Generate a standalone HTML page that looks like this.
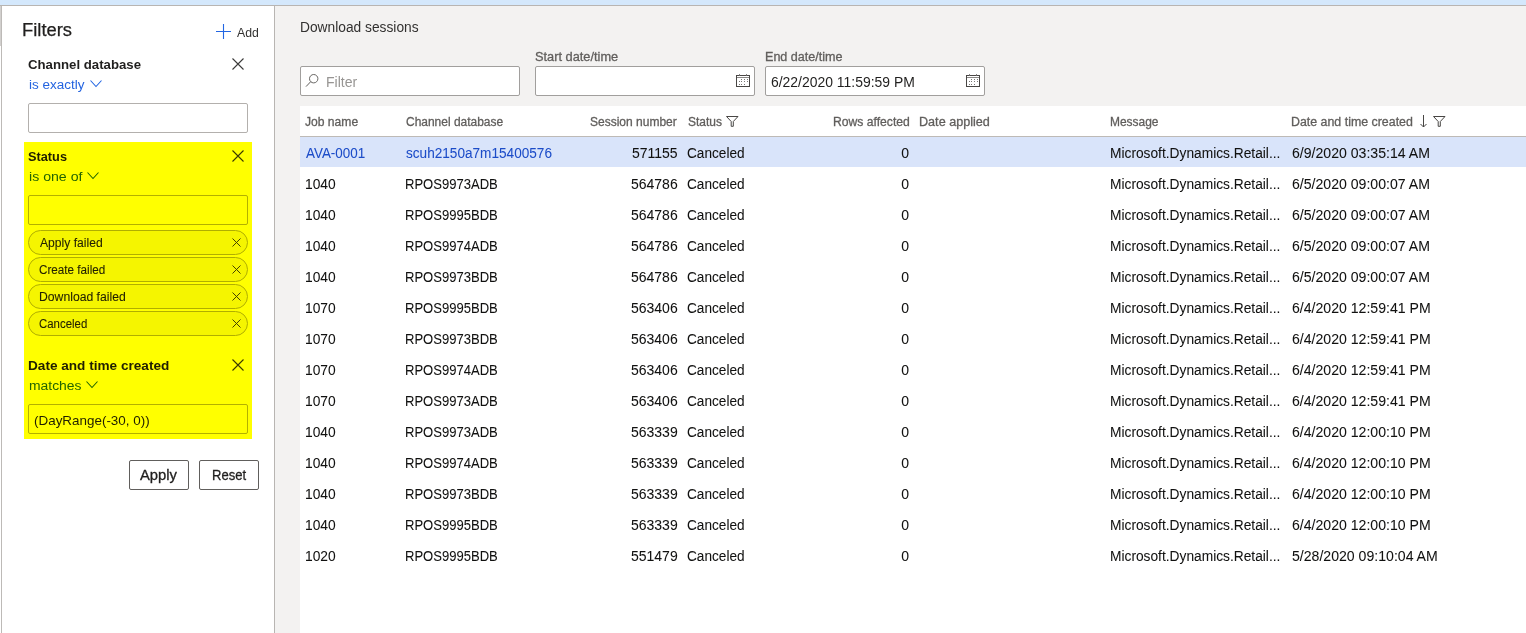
<!DOCTYPE html>
<html><head><meta charset="utf-8"><style>
html,body{margin:0;padding:0;}
body{width:1526px;height:633px;overflow:hidden;position:relative;background:#fff;font-family:"Liberation Sans",sans-serif;}
.t{position:absolute;white-space:nowrap;}
svg{position:absolute;overflow:visible;}
</style></head><body>
<div style="position:absolute;left:0px;top:0px;width:1526px;height:5px;box-sizing:border-box;background:#d4e8fc;"></div>
<div style="position:absolute;left:0px;top:5px;width:1526px;height:1px;box-sizing:border-box;background:#b8b5b2;"></div>
<div style="position:absolute;left:0px;top:6px;width:1px;height:40px;box-sizing:border-box;background:#d2d0ce;"></div>
<div style="position:absolute;left:1px;top:6px;width:1px;height:627px;box-sizing:border-box;background:#bdbab7;"></div>
<div style="position:absolute;left:275px;top:6px;width:1251px;height:627px;box-sizing:border-box;background:#f3f2f1;"></div>
<div style="position:absolute;left:274px;top:6px;width:1px;height:627px;box-sizing:border-box;background:#b8b5b2;"></div>
<div class="t" style="left:21.53px;top:21px;font-size:18px;line-height:18px;color:#201f1e;transform:scaleX(1.0217);transform-origin:0 0;-webkit-text-stroke:0.25px #201f1e;">Filters</div>
<svg style="left:216px;top:24px" width="15" height="15"><path d="M0 7.5H15M7.5 0V15" stroke="#2266e3" stroke-width="1.1" fill="none"/></svg>
<div class="t" style="left:236.50px;top:27px;font-size:12px;line-height:12px;color:#323130;transform:scaleX(1.0234);transform-origin:0 0;">Add</div>
<div class="t" style="left:27.97px;top:58px;font-size:13px;line-height:13px;color:#201f1e;font-weight:700;transform:scaleX(1.0160);transform-origin:0 0;">Channel database</div>
<svg style="left:232px;top:58px" width="12" height="12"><path d="M0.5 0.5L11.5 11.5M11.5 0.5L0.5 11.5" stroke="#3b3a39" stroke-width="1.1" fill="none"/></svg>
<div class="t" style="left:29.06px;top:78px;font-size:13.7px;line-height:13.7px;color:#2464e0;transform:scaleX(0.9847);transform-origin:0 0;">is exactly</div>
<svg style="left:89.5px;top:80px" width="12" height="7"><path d="M0.5 0.5L6.0 6.5L11.5 0.5" stroke="#2266e3" stroke-width="1.1" fill="none"/></svg>
<div style="position:absolute;left:28px;top:103px;width:220px;height:30px;box-sizing:border-box;border:1px solid #b3b0ad;border-radius:2px;background:#fff;"></div>
<div class="t" style="left:28.32px;top:150px;font-size:13px;line-height:13px;color:#201f1e;font-weight:700;transform:scaleX(0.9809);transform-origin:0 0;">Status</div>
<svg style="left:232px;top:150px" width="12" height="12"><path d="M0.5 0.5L11.5 11.5M11.5 0.5L0.5 11.5" stroke="#3b3a39" stroke-width="1.1" fill="none"/></svg>
<div class="t" style="left:28.71px;top:170px;font-size:13.7px;line-height:13.7px;color:#2464e0;transform:scaleX(1.0329);transform-origin:0 0;">is one of</div>
<svg style="left:87px;top:172px" width="12" height="7"><path d="M0.5 0.5L6.0 6.5L11.5 0.5" stroke="#2266e3" stroke-width="1.1" fill="none"/></svg>
<div style="position:absolute;left:28px;top:195px;width:220px;height:30px;box-sizing:border-box;border:1px solid #b3b0ad;border-radius:2px;background:#fff;"></div>
<div style="position:absolute;left:28px;top:230px;width:220px;height:25px;box-sizing:border-box;border:1px solid #b0aeac;border-radius:13px;background:#f5f5f5;"></div>
<div class="t" style="left:39.50px;top:237px;font-size:12.5px;line-height:12.5px;color:#201f1e;transform:scaleX(0.9706);transform-origin:0 0;-webkit-text-stroke:0.1px #201f1e;">Apply failed</div>
<svg style="left:231.5px;top:237.7px" width="9" height="9"><path d="M0.5 0.5L8.5 8.5M8.5 0.5L0.5 8.5" stroke="#3b3a39" stroke-width="0.95" fill="none"/></svg>
<div style="position:absolute;left:28px;top:257px;width:220px;height:25px;box-sizing:border-box;border:1px solid #b0aeac;border-radius:13px;background:#f5f5f5;"></div>
<div class="t" style="left:38.92px;top:264px;font-size:12.5px;line-height:12.5px;color:#201f1e;transform:scaleX(0.9353);transform-origin:0 0;-webkit-text-stroke:0.1px #201f1e;">Create failed</div>
<svg style="left:231.5px;top:264.7px" width="9" height="9"><path d="M0.5 0.5L8.5 8.5M8.5 0.5L0.5 8.5" stroke="#3b3a39" stroke-width="0.95" fill="none"/></svg>
<div style="position:absolute;left:28px;top:284px;width:220px;height:25px;box-sizing:border-box;border:1px solid #b0aeac;border-radius:13px;background:#f5f5f5;"></div>
<div class="t" style="left:38.52px;top:291px;font-size:12.5px;line-height:12.5px;color:#201f1e;transform:scaleX(0.9756);transform-origin:0 0;-webkit-text-stroke:0.1px #201f1e;">Download failed</div>
<svg style="left:231.5px;top:291.7px" width="9" height="9"><path d="M0.5 0.5L8.5 8.5M8.5 0.5L0.5 8.5" stroke="#3b3a39" stroke-width="0.95" fill="none"/></svg>
<div style="position:absolute;left:28px;top:311px;width:220px;height:25px;box-sizing:border-box;border:1px solid #b0aeac;border-radius:13px;background:#f5f5f5;"></div>
<div class="t" style="left:38.93px;top:318px;font-size:12.5px;line-height:12.5px;color:#201f1e;transform:scaleX(0.9148);transform-origin:0 0;-webkit-text-stroke:0.1px #201f1e;">Canceled</div>
<svg style="left:231.5px;top:318.7px" width="9" height="9"><path d="M0.5 0.5L8.5 8.5M8.5 0.5L0.5 8.5" stroke="#3b3a39" stroke-width="0.95" fill="none"/></svg>
<div class="t" style="left:27.95px;top:359px;font-size:13px;line-height:13px;color:#201f1e;font-weight:700;transform:scaleX(1.0459);transform-origin:0 0;">Date and time created</div>
<svg style="left:232px;top:359px" width="12" height="12"><path d="M0.5 0.5L11.5 11.5M11.5 0.5L0.5 11.5" stroke="#3b3a39" stroke-width="1.1" fill="none"/></svg>
<div class="t" style="left:28.83px;top:379px;font-size:13.7px;line-height:13.7px;color:#2464e0;transform:scaleX(1.0143);transform-origin:0 0;">matches</div>
<svg style="left:85.5px;top:381px" width="12" height="7"><path d="M0.5 0.5L6.0 6.5L11.5 0.5" stroke="#2266e3" stroke-width="1.1" fill="none"/></svg>
<div style="position:absolute;left:28px;top:404px;width:220px;height:30px;box-sizing:border-box;border:1px solid #b3b0ad;border-radius:2px;background:#fff;"></div>
<div class="t" style="left:33.69px;top:414px;font-size:13.5px;line-height:13.5px;color:#201f1e;transform:scaleX(0.9946);transform-origin:0 0;">(DayRange(-30, 0))</div>
<div style="position:absolute;left:24px;top:142px;width:228px;height:297px;box-sizing:border-box;background:#ffff00;mix-blend-mode:multiply;"></div>
<div style="position:absolute;left:129px;top:460px;width:60px;height:30px;box-sizing:border-box;border:1px solid #605e5c;border-radius:2px;background:#fff;"></div>
<div class="t" style="left:140.40px;top:468px;font-size:14px;line-height:14px;color:#201f1e;transform:scaleX(1.0571);transform-origin:0 0;-webkit-text-stroke:0.3px #201f1e;">Apply</div>
<div style="position:absolute;left:199px;top:460px;width:60px;height:30px;box-sizing:border-box;border:1px solid #605e5c;border-radius:2px;background:#fff;"></div>
<div class="t" style="left:211.76px;top:468px;font-size:14px;line-height:14px;color:#201f1e;transform:scaleX(0.9317);transform-origin:0 0;-webkit-text-stroke:0.3px #201f1e;">Reset</div>
<div class="t" style="left:299.50px;top:20px;font-size:14px;line-height:14px;color:#323130;transform:scaleX(0.9832);transform-origin:0 0;">Download sessions</div>
<div class="t" style="left:534.56px;top:51px;font-size:12.5px;line-height:12.5px;color:#605e5c;transform:scaleX(1.0234);transform-origin:0 0;-webkit-text-stroke:0.3px #605e5c;">Start date/time</div>
<div class="t" style="left:764.70px;top:51px;font-size:12.5px;line-height:12.5px;color:#605e5c;transform:scaleX(1.0050);transform-origin:0 0;-webkit-text-stroke:0.3px #605e5c;">End date/time</div>
<div style="position:absolute;left:300px;top:66px;width:220px;height:30px;box-sizing:border-box;border:1px solid #a19f9d;border-radius:2px;background:#fff;"></div>
<div style="position:absolute;left:535px;top:66px;width:220px;height:30px;box-sizing:border-box;border:1px solid #a19f9d;border-radius:2px;background:#fff;"></div>
<div style="position:absolute;left:765px;top:66px;width:220px;height:30px;box-sizing:border-box;border:1px solid #a19f9d;border-radius:2px;background:#fff;"></div>
<svg style="left:305px;top:73px" width="15" height="15"><circle cx="8.7" cy="5.7" r="4.2" stroke="#605e5c" stroke-width="0.95" fill="none"/><path d="M5.7 8.7L1 13.6" stroke="#605e5c" stroke-width="1"/></svg>
<div class="t" style="left:325.87px;top:75px;font-size:14px;line-height:14px;color:#979593;transform:scaleX(1.0060);transform-origin:0 0;">Filter</div>
<svg style="left:736px;top:74px" width="15" height="13"><rect x="0.5" y="1.5" width="13" height="11" stroke="#484644" fill="none" stroke-width="1"/><path d="M1 3.5H13" stroke="#8a8886" stroke-width="1"/><path d="M3.5 0V1.5M10.5 0V1.5" stroke="#8a8886" stroke-width="1"/><rect x="5" y="5" width="1" height="1" fill="#797775"/><rect x="8" y="5" width="1" height="1" fill="#797775"/><rect x="11" y="5" width="1" height="1" fill="#797775"/><rect x="3" y="7" width="1" height="1" fill="#797775"/><rect x="5" y="7" width="1" height="1" fill="#797775"/><rect x="8" y="7" width="1" height="1" fill="#797775"/><rect x="11" y="7" width="1" height="1" fill="#797775"/><rect x="3" y="10" width="1" height="1" fill="#797775"/><rect x="5" y="10" width="1" height="1" fill="#797775"/><rect x="8" y="10" width="1" height="1" fill="#797775"/></svg>
<svg style="left:966px;top:74px" width="15" height="13"><rect x="0.5" y="1.5" width="13" height="11" stroke="#484644" fill="none" stroke-width="1"/><path d="M1 3.5H13" stroke="#8a8886" stroke-width="1"/><path d="M3.5 0V1.5M10.5 0V1.5" stroke="#8a8886" stroke-width="1"/><rect x="5" y="5" width="1" height="1" fill="#797775"/><rect x="8" y="5" width="1" height="1" fill="#797775"/><rect x="11" y="5" width="1" height="1" fill="#797775"/><rect x="3" y="7" width="1" height="1" fill="#797775"/><rect x="5" y="7" width="1" height="1" fill="#797775"/><rect x="8" y="7" width="1" height="1" fill="#797775"/><rect x="11" y="7" width="1" height="1" fill="#797775"/><rect x="3" y="10" width="1" height="1" fill="#797775"/><rect x="5" y="10" width="1" height="1" fill="#797775"/><rect x="8" y="10" width="1" height="1" fill="#797775"/></svg>
<div class="t" style="left:770.60px;top:75px;font-size:14px;line-height:14px;color:#201f1e;transform:scaleX(0.9954);transform-origin:0 0;">6/22/2020 11:59:59 PM</div>
<div style="position:absolute;left:300px;top:106px;width:1226px;height:527px;box-sizing:border-box;background:#fff;"></div>
<div style="position:absolute;left:300px;top:136px;width:1226px;height:1px;box-sizing:border-box;background:#bebab6;"></div>
<div style="position:absolute;left:300px;top:137px;width:1226px;height:30px;box-sizing:border-box;background:#d9e4fa;"></div>
<div class="t" style="left:304.76px;top:116px;font-size:12.5px;line-height:12.5px;color:#605e5c;transform:scaleX(0.9681);transform-origin:0 0;-webkit-text-stroke:0.3px #605e5c;">Job name</div>
<div class="t" style="left:405.70px;top:116px;font-size:12.5px;line-height:12.5px;color:#605e5c;transform:scaleX(0.9576);transform-origin:0 0;-webkit-text-stroke:0.3px #605e5c;">Channel database</div>
<div class="t" style="left:590.40px;top:116px;font-size:12.5px;line-height:12.5px;color:#605e5c;transform:scaleX(0.9609);transform-origin:0 0;-webkit-text-stroke:0.3px #605e5c;">Session number</div>
<div class="t" style="left:687.70px;top:116px;font-size:12.5px;line-height:12.5px;color:#605e5c;transform:scaleX(0.9600);transform-origin:0 0;-webkit-text-stroke:0.3px #605e5c;">Status</div>
<div class="t" style="left:832.53px;top:116px;font-size:12.5px;line-height:12.5px;color:#605e5c;transform:scaleX(0.9724);transform-origin:0 0;-webkit-text-stroke:0.3px #605e5c;">Rows affected</div>
<div class="t" style="left:919.29px;top:116px;font-size:12.5px;line-height:12.5px;color:#605e5c;transform:scaleX(1.0091);transform-origin:0 0;-webkit-text-stroke:0.3px #605e5c;">Date applied</div>
<div class="t" style="left:1110.44px;top:116px;font-size:12.5px;line-height:12.5px;color:#605e5c;transform:scaleX(0.9567);transform-origin:0 0;-webkit-text-stroke:0.3px #605e5c;">Message</div>
<div class="t" style="left:1291.31px;top:116px;font-size:12.5px;line-height:12.5px;color:#605e5c;transform:scaleX(0.9907);transform-origin:0 0;-webkit-text-stroke:0.3px #605e5c;">Date and time created</div>
<svg style="left:726px;top:116px" width="13" height="11"><path d="M0.5 0.5H12L7.3 5.5V10.3H5.2V5.5Z" stroke="#484644" stroke-width="1" fill="none" stroke-linejoin="round"/></svg>
<svg style="left:1419px;top:115px" width="9" height="13"><path d="M4.5 0V12M1.5 9L4.5 12L7.5 9" stroke="#484644" stroke-width="1" fill="none"/></svg>
<svg style="left:1433px;top:116px" width="13" height="11"><path d="M0.5 0.5H12L7.3 5.5V10.3H5.2V5.5Z" stroke="#484644" stroke-width="1" fill="none" stroke-linejoin="round"/></svg>
<div class="t" style="left:306.00px;top:146px;font-size:14px;line-height:14px;color:#1c4cc8;transform:scaleX(0.9584);transform-origin:0 0;-webkit-text-stroke:0.05px #1c4cc8;">AVA-0001</div>
<div class="t" style="left:405.59px;top:146px;font-size:14px;line-height:14px;color:#1c4cc8;transform:scaleX(0.9716);transform-origin:0 0;-webkit-text-stroke:0.05px #1c4cc8;">scuh2150a7m15400576</div>
<div class="t" style="left:631.94px;top:146px;font-size:14px;line-height:14px;color:#111110;-webkit-text-stroke:0.05px #111110;">571155</div>
<div class="t" style="left:687.32px;top:146px;font-size:14px;line-height:14px;color:#111110;transform:scaleX(0.9732);transform-origin:0 0;-webkit-text-stroke:0.05px #111110;">Canceled</div>
<div class="t" style="left:901.22px;top:146px;font-size:14px;line-height:14px;color:#111110;-webkit-text-stroke:0.05px #111110;">0</div>
<div class="t" style="left:1110.20px;top:146px;font-size:14px;line-height:14px;color:#111110;transform:scaleX(0.9820);transform-origin:0 0;-webkit-text-stroke:0.05px #111110;">Microsoft.Dynamics.Retail...</div>
<div class="t" style="left:1291.50px;top:146px;font-size:14px;line-height:14px;color:#111110;transform:scaleX(1.0067);transform-origin:0 0;-webkit-text-stroke:0.05px #111110;">6/9/2020 03:35:14 AM</div>
<div class="t" style="left:304.90px;top:177px;font-size:14px;line-height:14px;color:#111110;transform:scaleX(0.9864);transform-origin:0 0;-webkit-text-stroke:0.05px #111110;">1040</div>
<div class="t" style="left:404.96px;top:177px;font-size:14px;line-height:14px;color:#111110;transform:scaleX(0.9312);transform-origin:0 0;-webkit-text-stroke:0.05px #111110;">RPOS9973ADB</div>
<div class="t" style="left:630.96px;top:177px;font-size:14px;line-height:14px;color:#111110;-webkit-text-stroke:0.05px #111110;">564786</div>
<div class="t" style="left:687.32px;top:177px;font-size:14px;line-height:14px;color:#111110;transform:scaleX(0.9732);transform-origin:0 0;-webkit-text-stroke:0.05px #111110;">Canceled</div>
<div class="t" style="left:901.22px;top:177px;font-size:14px;line-height:14px;color:#111110;-webkit-text-stroke:0.05px #111110;">0</div>
<div class="t" style="left:1110.20px;top:177px;font-size:14px;line-height:14px;color:#111110;transform:scaleX(0.9820);transform-origin:0 0;-webkit-text-stroke:0.05px #111110;">Microsoft.Dynamics.Retail...</div>
<div class="t" style="left:1291.50px;top:177px;font-size:14px;line-height:14px;color:#111110;transform:scaleX(1.0067);transform-origin:0 0;-webkit-text-stroke:0.05px #111110;">6/5/2020 09:00:07 AM</div>
<div class="t" style="left:304.90px;top:208px;font-size:14px;line-height:14px;color:#111110;transform:scaleX(0.9864);transform-origin:0 0;-webkit-text-stroke:0.05px #111110;">1040</div>
<div class="t" style="left:404.96px;top:208px;font-size:14px;line-height:14px;color:#111110;transform:scaleX(0.9312);transform-origin:0 0;-webkit-text-stroke:0.05px #111110;">RPOS9995BDB</div>
<div class="t" style="left:630.96px;top:208px;font-size:14px;line-height:14px;color:#111110;-webkit-text-stroke:0.05px #111110;">564786</div>
<div class="t" style="left:687.32px;top:208px;font-size:14px;line-height:14px;color:#111110;transform:scaleX(0.9732);transform-origin:0 0;-webkit-text-stroke:0.05px #111110;">Canceled</div>
<div class="t" style="left:901.22px;top:208px;font-size:14px;line-height:14px;color:#111110;-webkit-text-stroke:0.05px #111110;">0</div>
<div class="t" style="left:1110.20px;top:208px;font-size:14px;line-height:14px;color:#111110;transform:scaleX(0.9820);transform-origin:0 0;-webkit-text-stroke:0.05px #111110;">Microsoft.Dynamics.Retail...</div>
<div class="t" style="left:1291.50px;top:208px;font-size:14px;line-height:14px;color:#111110;transform:scaleX(1.0067);transform-origin:0 0;-webkit-text-stroke:0.05px #111110;">6/5/2020 09:00:07 AM</div>
<div class="t" style="left:304.90px;top:239px;font-size:14px;line-height:14px;color:#111110;transform:scaleX(0.9864);transform-origin:0 0;-webkit-text-stroke:0.05px #111110;">1040</div>
<div class="t" style="left:404.96px;top:239px;font-size:14px;line-height:14px;color:#111110;transform:scaleX(0.9312);transform-origin:0 0;-webkit-text-stroke:0.05px #111110;">RPOS9974ADB</div>
<div class="t" style="left:630.96px;top:239px;font-size:14px;line-height:14px;color:#111110;-webkit-text-stroke:0.05px #111110;">564786</div>
<div class="t" style="left:687.32px;top:239px;font-size:14px;line-height:14px;color:#111110;transform:scaleX(0.9732);transform-origin:0 0;-webkit-text-stroke:0.05px #111110;">Canceled</div>
<div class="t" style="left:901.22px;top:239px;font-size:14px;line-height:14px;color:#111110;-webkit-text-stroke:0.05px #111110;">0</div>
<div class="t" style="left:1110.20px;top:239px;font-size:14px;line-height:14px;color:#111110;transform:scaleX(0.9820);transform-origin:0 0;-webkit-text-stroke:0.05px #111110;">Microsoft.Dynamics.Retail...</div>
<div class="t" style="left:1291.50px;top:239px;font-size:14px;line-height:14px;color:#111110;transform:scaleX(1.0067);transform-origin:0 0;-webkit-text-stroke:0.05px #111110;">6/5/2020 09:00:07 AM</div>
<div class="t" style="left:304.90px;top:270px;font-size:14px;line-height:14px;color:#111110;transform:scaleX(0.9864);transform-origin:0 0;-webkit-text-stroke:0.05px #111110;">1040</div>
<div class="t" style="left:404.96px;top:270px;font-size:14px;line-height:14px;color:#111110;transform:scaleX(0.9312);transform-origin:0 0;-webkit-text-stroke:0.05px #111110;">RPOS9973BDB</div>
<div class="t" style="left:630.96px;top:270px;font-size:14px;line-height:14px;color:#111110;-webkit-text-stroke:0.05px #111110;">564786</div>
<div class="t" style="left:687.32px;top:270px;font-size:14px;line-height:14px;color:#111110;transform:scaleX(0.9732);transform-origin:0 0;-webkit-text-stroke:0.05px #111110;">Canceled</div>
<div class="t" style="left:901.22px;top:270px;font-size:14px;line-height:14px;color:#111110;-webkit-text-stroke:0.05px #111110;">0</div>
<div class="t" style="left:1110.20px;top:270px;font-size:14px;line-height:14px;color:#111110;transform:scaleX(0.9820);transform-origin:0 0;-webkit-text-stroke:0.05px #111110;">Microsoft.Dynamics.Retail...</div>
<div class="t" style="left:1291.50px;top:270px;font-size:14px;line-height:14px;color:#111110;transform:scaleX(1.0067);transform-origin:0 0;-webkit-text-stroke:0.05px #111110;">6/5/2020 09:00:07 AM</div>
<div class="t" style="left:304.90px;top:301px;font-size:14px;line-height:14px;color:#111110;transform:scaleX(0.9864);transform-origin:0 0;-webkit-text-stroke:0.05px #111110;">1070</div>
<div class="t" style="left:404.96px;top:301px;font-size:14px;line-height:14px;color:#111110;transform:scaleX(0.9312);transform-origin:0 0;-webkit-text-stroke:0.05px #111110;">RPOS9995BDB</div>
<div class="t" style="left:630.96px;top:301px;font-size:14px;line-height:14px;color:#111110;-webkit-text-stroke:0.05px #111110;">563406</div>
<div class="t" style="left:687.32px;top:301px;font-size:14px;line-height:14px;color:#111110;transform:scaleX(0.9732);transform-origin:0 0;-webkit-text-stroke:0.05px #111110;">Canceled</div>
<div class="t" style="left:901.22px;top:301px;font-size:14px;line-height:14px;color:#111110;-webkit-text-stroke:0.05px #111110;">0</div>
<div class="t" style="left:1110.20px;top:301px;font-size:14px;line-height:14px;color:#111110;transform:scaleX(0.9820);transform-origin:0 0;-webkit-text-stroke:0.05px #111110;">Microsoft.Dynamics.Retail...</div>
<div class="t" style="left:1291.50px;top:301px;font-size:14px;line-height:14px;color:#111110;transform:scaleX(1.0067);transform-origin:0 0;-webkit-text-stroke:0.05px #111110;">6/4/2020 12:59:41 PM</div>
<div class="t" style="left:304.90px;top:332px;font-size:14px;line-height:14px;color:#111110;transform:scaleX(0.9864);transform-origin:0 0;-webkit-text-stroke:0.05px #111110;">1070</div>
<div class="t" style="left:404.96px;top:332px;font-size:14px;line-height:14px;color:#111110;transform:scaleX(0.9312);transform-origin:0 0;-webkit-text-stroke:0.05px #111110;">RPOS9973BDB</div>
<div class="t" style="left:630.96px;top:332px;font-size:14px;line-height:14px;color:#111110;-webkit-text-stroke:0.05px #111110;">563406</div>
<div class="t" style="left:687.32px;top:332px;font-size:14px;line-height:14px;color:#111110;transform:scaleX(0.9732);transform-origin:0 0;-webkit-text-stroke:0.05px #111110;">Canceled</div>
<div class="t" style="left:901.22px;top:332px;font-size:14px;line-height:14px;color:#111110;-webkit-text-stroke:0.05px #111110;">0</div>
<div class="t" style="left:1110.20px;top:332px;font-size:14px;line-height:14px;color:#111110;transform:scaleX(0.9820);transform-origin:0 0;-webkit-text-stroke:0.05px #111110;">Microsoft.Dynamics.Retail...</div>
<div class="t" style="left:1291.50px;top:332px;font-size:14px;line-height:14px;color:#111110;transform:scaleX(1.0067);transform-origin:0 0;-webkit-text-stroke:0.05px #111110;">6/4/2020 12:59:41 PM</div>
<div class="t" style="left:304.90px;top:363px;font-size:14px;line-height:14px;color:#111110;transform:scaleX(0.9864);transform-origin:0 0;-webkit-text-stroke:0.05px #111110;">1070</div>
<div class="t" style="left:404.96px;top:363px;font-size:14px;line-height:14px;color:#111110;transform:scaleX(0.9312);transform-origin:0 0;-webkit-text-stroke:0.05px #111110;">RPOS9974ADB</div>
<div class="t" style="left:630.96px;top:363px;font-size:14px;line-height:14px;color:#111110;-webkit-text-stroke:0.05px #111110;">563406</div>
<div class="t" style="left:687.32px;top:363px;font-size:14px;line-height:14px;color:#111110;transform:scaleX(0.9732);transform-origin:0 0;-webkit-text-stroke:0.05px #111110;">Canceled</div>
<div class="t" style="left:901.22px;top:363px;font-size:14px;line-height:14px;color:#111110;-webkit-text-stroke:0.05px #111110;">0</div>
<div class="t" style="left:1110.20px;top:363px;font-size:14px;line-height:14px;color:#111110;transform:scaleX(0.9820);transform-origin:0 0;-webkit-text-stroke:0.05px #111110;">Microsoft.Dynamics.Retail...</div>
<div class="t" style="left:1291.50px;top:363px;font-size:14px;line-height:14px;color:#111110;transform:scaleX(1.0067);transform-origin:0 0;-webkit-text-stroke:0.05px #111110;">6/4/2020 12:59:41 PM</div>
<div class="t" style="left:304.90px;top:394px;font-size:14px;line-height:14px;color:#111110;transform:scaleX(0.9864);transform-origin:0 0;-webkit-text-stroke:0.05px #111110;">1070</div>
<div class="t" style="left:404.96px;top:394px;font-size:14px;line-height:14px;color:#111110;transform:scaleX(0.9312);transform-origin:0 0;-webkit-text-stroke:0.05px #111110;">RPOS9973ADB</div>
<div class="t" style="left:630.96px;top:394px;font-size:14px;line-height:14px;color:#111110;-webkit-text-stroke:0.05px #111110;">563406</div>
<div class="t" style="left:687.32px;top:394px;font-size:14px;line-height:14px;color:#111110;transform:scaleX(0.9732);transform-origin:0 0;-webkit-text-stroke:0.05px #111110;">Canceled</div>
<div class="t" style="left:901.22px;top:394px;font-size:14px;line-height:14px;color:#111110;-webkit-text-stroke:0.05px #111110;">0</div>
<div class="t" style="left:1110.20px;top:394px;font-size:14px;line-height:14px;color:#111110;transform:scaleX(0.9820);transform-origin:0 0;-webkit-text-stroke:0.05px #111110;">Microsoft.Dynamics.Retail...</div>
<div class="t" style="left:1291.50px;top:394px;font-size:14px;line-height:14px;color:#111110;transform:scaleX(1.0067);transform-origin:0 0;-webkit-text-stroke:0.05px #111110;">6/4/2020 12:59:41 PM</div>
<div class="t" style="left:304.90px;top:425px;font-size:14px;line-height:14px;color:#111110;transform:scaleX(0.9864);transform-origin:0 0;-webkit-text-stroke:0.05px #111110;">1040</div>
<div class="t" style="left:404.96px;top:425px;font-size:14px;line-height:14px;color:#111110;transform:scaleX(0.9312);transform-origin:0 0;-webkit-text-stroke:0.05px #111110;">RPOS9973ADB</div>
<div class="t" style="left:630.96px;top:425px;font-size:14px;line-height:14px;color:#111110;-webkit-text-stroke:0.05px #111110;">563339</div>
<div class="t" style="left:687.32px;top:425px;font-size:14px;line-height:14px;color:#111110;transform:scaleX(0.9732);transform-origin:0 0;-webkit-text-stroke:0.05px #111110;">Canceled</div>
<div class="t" style="left:901.22px;top:425px;font-size:14px;line-height:14px;color:#111110;-webkit-text-stroke:0.05px #111110;">0</div>
<div class="t" style="left:1110.20px;top:425px;font-size:14px;line-height:14px;color:#111110;transform:scaleX(0.9820);transform-origin:0 0;-webkit-text-stroke:0.05px #111110;">Microsoft.Dynamics.Retail...</div>
<div class="t" style="left:1291.50px;top:425px;font-size:14px;line-height:14px;color:#111110;transform:scaleX(1.0067);transform-origin:0 0;-webkit-text-stroke:0.05px #111110;">6/4/2020 12:00:10 PM</div>
<div class="t" style="left:304.90px;top:456px;font-size:14px;line-height:14px;color:#111110;transform:scaleX(0.9864);transform-origin:0 0;-webkit-text-stroke:0.05px #111110;">1040</div>
<div class="t" style="left:404.96px;top:456px;font-size:14px;line-height:14px;color:#111110;transform:scaleX(0.9312);transform-origin:0 0;-webkit-text-stroke:0.05px #111110;">RPOS9974ADB</div>
<div class="t" style="left:630.96px;top:456px;font-size:14px;line-height:14px;color:#111110;-webkit-text-stroke:0.05px #111110;">563339</div>
<div class="t" style="left:687.32px;top:456px;font-size:14px;line-height:14px;color:#111110;transform:scaleX(0.9732);transform-origin:0 0;-webkit-text-stroke:0.05px #111110;">Canceled</div>
<div class="t" style="left:901.22px;top:456px;font-size:14px;line-height:14px;color:#111110;-webkit-text-stroke:0.05px #111110;">0</div>
<div class="t" style="left:1110.20px;top:456px;font-size:14px;line-height:14px;color:#111110;transform:scaleX(0.9820);transform-origin:0 0;-webkit-text-stroke:0.05px #111110;">Microsoft.Dynamics.Retail...</div>
<div class="t" style="left:1291.50px;top:456px;font-size:14px;line-height:14px;color:#111110;transform:scaleX(1.0067);transform-origin:0 0;-webkit-text-stroke:0.05px #111110;">6/4/2020 12:00:10 PM</div>
<div class="t" style="left:304.90px;top:487px;font-size:14px;line-height:14px;color:#111110;transform:scaleX(0.9864);transform-origin:0 0;-webkit-text-stroke:0.05px #111110;">1040</div>
<div class="t" style="left:404.96px;top:487px;font-size:14px;line-height:14px;color:#111110;transform:scaleX(0.9312);transform-origin:0 0;-webkit-text-stroke:0.05px #111110;">RPOS9973BDB</div>
<div class="t" style="left:630.96px;top:487px;font-size:14px;line-height:14px;color:#111110;-webkit-text-stroke:0.05px #111110;">563339</div>
<div class="t" style="left:687.32px;top:487px;font-size:14px;line-height:14px;color:#111110;transform:scaleX(0.9732);transform-origin:0 0;-webkit-text-stroke:0.05px #111110;">Canceled</div>
<div class="t" style="left:901.22px;top:487px;font-size:14px;line-height:14px;color:#111110;-webkit-text-stroke:0.05px #111110;">0</div>
<div class="t" style="left:1110.20px;top:487px;font-size:14px;line-height:14px;color:#111110;transform:scaleX(0.9820);transform-origin:0 0;-webkit-text-stroke:0.05px #111110;">Microsoft.Dynamics.Retail...</div>
<div class="t" style="left:1291.50px;top:487px;font-size:14px;line-height:14px;color:#111110;transform:scaleX(1.0067);transform-origin:0 0;-webkit-text-stroke:0.05px #111110;">6/4/2020 12:00:10 PM</div>
<div class="t" style="left:304.90px;top:518px;font-size:14px;line-height:14px;color:#111110;transform:scaleX(0.9864);transform-origin:0 0;-webkit-text-stroke:0.05px #111110;">1040</div>
<div class="t" style="left:404.96px;top:518px;font-size:14px;line-height:14px;color:#111110;transform:scaleX(0.9312);transform-origin:0 0;-webkit-text-stroke:0.05px #111110;">RPOS9995BDB</div>
<div class="t" style="left:630.96px;top:518px;font-size:14px;line-height:14px;color:#111110;-webkit-text-stroke:0.05px #111110;">563339</div>
<div class="t" style="left:687.32px;top:518px;font-size:14px;line-height:14px;color:#111110;transform:scaleX(0.9732);transform-origin:0 0;-webkit-text-stroke:0.05px #111110;">Canceled</div>
<div class="t" style="left:901.22px;top:518px;font-size:14px;line-height:14px;color:#111110;-webkit-text-stroke:0.05px #111110;">0</div>
<div class="t" style="left:1110.20px;top:518px;font-size:14px;line-height:14px;color:#111110;transform:scaleX(0.9820);transform-origin:0 0;-webkit-text-stroke:0.05px #111110;">Microsoft.Dynamics.Retail...</div>
<div class="t" style="left:1291.50px;top:518px;font-size:14px;line-height:14px;color:#111110;transform:scaleX(1.0067);transform-origin:0 0;-webkit-text-stroke:0.05px #111110;">6/4/2020 12:00:10 PM</div>
<div class="t" style="left:304.90px;top:549px;font-size:14px;line-height:14px;color:#111110;transform:scaleX(0.9864);transform-origin:0 0;-webkit-text-stroke:0.05px #111110;">1020</div>
<div class="t" style="left:404.96px;top:549px;font-size:14px;line-height:14px;color:#111110;transform:scaleX(0.9312);transform-origin:0 0;-webkit-text-stroke:0.05px #111110;">RPOS9995BDB</div>
<div class="t" style="left:630.96px;top:549px;font-size:14px;line-height:14px;color:#111110;-webkit-text-stroke:0.05px #111110;">551479</div>
<div class="t" style="left:687.32px;top:549px;font-size:14px;line-height:14px;color:#111110;transform:scaleX(0.9732);transform-origin:0 0;-webkit-text-stroke:0.05px #111110;">Canceled</div>
<div class="t" style="left:901.22px;top:549px;font-size:14px;line-height:14px;color:#111110;-webkit-text-stroke:0.05px #111110;">0</div>
<div class="t" style="left:1110.20px;top:549px;font-size:14px;line-height:14px;color:#111110;transform:scaleX(0.9820);transform-origin:0 0;-webkit-text-stroke:0.05px #111110;">Microsoft.Dynamics.Retail...</div>
<div class="t" style="left:1291.64px;top:549px;font-size:14px;line-height:14px;color:#111110;transform:scaleX(1.0067);transform-origin:0 0;-webkit-text-stroke:0.05px #111110;">5/28/2020 09:10:04 AM</div>
</body></html>
